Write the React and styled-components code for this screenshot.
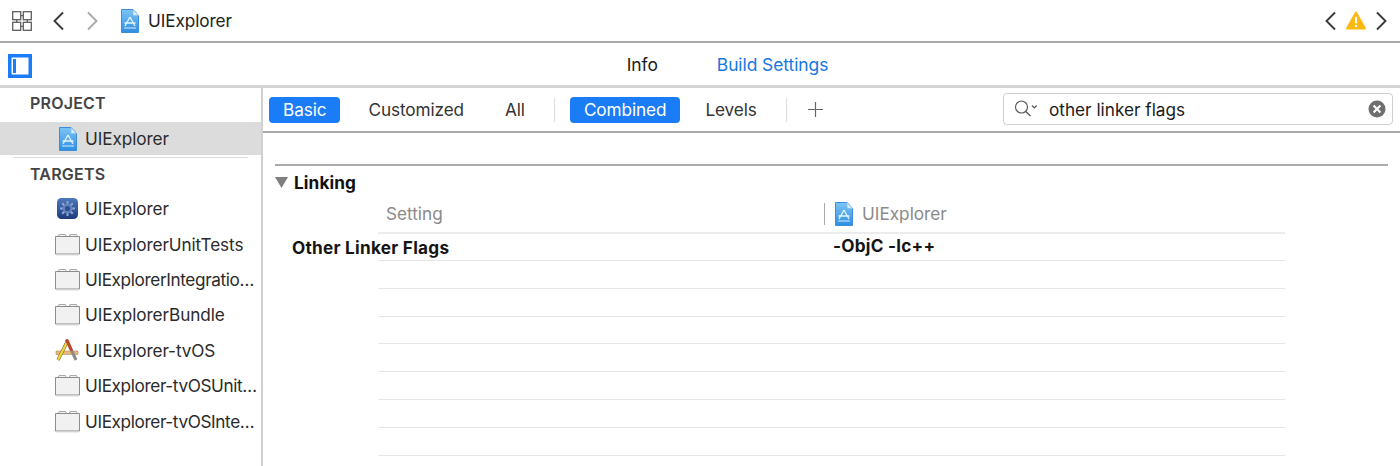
import React from 'react';
import styled, { createGlobalStyle } from 'styled-components';

const Global = createGlobalStyle`
  html, body { margin: 0; padding: 0; background: #fff; }
  body { font-family: Inter, "Liberation Sans", sans-serif; color: #1c1c1c; overflow: hidden; }
  #root { width: 1400px; height: 466px; overflow: hidden; }
`;

const Page = styled.div`
  width: 1400px; height: 466px; display: flex; flex-direction: column; background: #fff;
`;
const TopBar = styled.header`
  height: 41px; flex: none; display: flex; align-items: center; padding: 0 12px 0 12px;
  border-bottom: 2px solid #a9a9a9;
`;
const NavGroup = styled.div`
  display: flex; align-items: center; gap: ${p => p.$gap || 0}px;
`;
const Crumb = styled.span`
  font-size: 17.2px; letter-spacing: -0.1px; color: #222; margin-left: 9px;
`;
const Spacer = styled.div` flex: 1; `;
const TabBar = styled.div`
  height: 42px; flex: none; position: relative; display: flex; align-items: center; justify-content: center;
  padding-left: 55px; gap: 59px; border-bottom: 3px solid #d4d4d4;
`;
const ToggleWrap = styled.div`
  position: absolute; left: 8px; top: 11px; line-height: 0;
`;
const Tab = styled.span`
  font-size: 17.4px; letter-spacing: -0.05px; color: ${p => (p.$active ? '#1577e0' : '#1c1c1c')};
`;
const Body = styled.div`
  flex: 1; min-height: 0; display: flex;
`;
const Sidebar = styled.aside`
  width: 261px; flex: none; border-right: 2px solid #d0d0d0; display: flex; flex-direction: column;
`;
const SectionHead = styled.div`
  height: ${p => p.$h}px; box-sizing: border-box; padding-bottom: ${p => p.$pb}px; flex: none; display: flex; align-items: center; padding-left: 30px;
  font-size: 16px; font-weight: 600; color: #444; letter-spacing: 0.2px;
`;
const SideRow = styled.div`
  height: ${p => (p.$selected ? 33 : 35.4)}px; flex: none; display: flex; align-items: center; font-size: 17.2px;
  letter-spacing: ${p => (p.$tight ? -0.38 : -0.1)}px; color: #2b2b2b;
  white-space: nowrap; overflow: hidden;
  background: ${p => (p.$selected ? '#dcdcdc' : 'transparent')};
`;
const IconSlot = styled.span`
  width: 85px; flex: none; display: flex; justify-content: flex-end; padding-right: ${p => p.$pr}px; box-sizing: border-box; line-height: 0;
`;
const SideRule = styled.div`
  height: 1px; margin: 2px 13px 0 13px; background: #dedede; flex: none;
`;
const Main = styled.main`
  flex: 1; min-width: 0; display: flex; flex-direction: column;
`;
const Filter = styled.div`
  height: 45px; flex: none; display: flex; align-items: center; padding: 0 7px 0 6px;
  border-bottom: 2px solid #a9a9a9; box-sizing: border-box;
`;
const Pill = styled.span`
  height: 26px; padding: 0 14px; display: flex; align-items: center; border-radius: 4px; background: #1a7cf6; color: #fff;
  font-size: 17.2px; letter-spacing: -0.1px; margin-right: ${p => p.$mr || 0}px;
`;
const Plain = styled.span`
  font-size: 17.2px; letter-spacing: -0.1px; color: #333; margin-right: ${p => p.$mr || 0}px;
`;
const Sep = styled.span`
  width: 1px; height: 24px; background: #dedede; margin-right: ${p => p.$mr || 0}px;
`;
const PlusIcon = styled.span` line-height: 0; `;
const Search = styled.div`
  width: 390px; height: 32px; margin-bottom: 1px; box-sizing: border-box; border: 1px solid #cfcfcf; border-radius: 4px; display: flex; align-items: center;
  padding: 0 6px 0 10px; font-size: 17.2px; color: #1c1c1c;
`;
const SearchText = styled.span` margin-left: 11px; flex: 1; `;
const Content = styled.div`
  flex: 1; min-height: 0; padding: 31px 12px 0 12px; display: flex; flex-direction: column;
`;
const Section = styled.div`
  border-top: 2px solid #ababab; display: flex; flex-direction: column;
`;
const Group = styled.div`
  height: 33px; display: flex; align-items: center; gap: 6px; font-size: 17.2px; font-weight: 700; letter-spacing: 0.1px; color: #111;
`;
const Table = styled.div`
  margin: 0 103px 0 103px; display: flex; flex-direction: column;
`;
const HeadRow = styled.div`
  height: 29px; padding-bottom: 4px; display: grid; grid-template-columns: 446px 1fr; align-items: center;
  border-bottom: 2px solid #ececec; font-size: 17.2px; letter-spacing: 0; color: #8a8a8a;
`;
const HeadCell = styled.div`
  padding-left: 8px;
`;
const HeadTarget = styled.div`
  display: flex; align-items: center; gap: 9px; height: 22px; border-left: 1px solid #a9a9a9; padding-left: 10px; line-height: 0;
`;
const HeadTargetText = styled.span` line-height: normal; `;
const DataRow = styled.div`
  height: 26px; display: grid; grid-template-columns: 447px 1fr; align-items: center; border-bottom: 1px solid #e6e6e6;
  font-size: 17.2px; font-weight: 700; letter-spacing: 0.25px; color: #151515;
`;
const Flag = styled.div`
  margin-left: -86px; white-space: nowrap;
`;
const FlagValue = styled.div`
  padding-left: 8px; position: relative; top: -2px;
`;
const EmptyRow = styled.div`
  height: 26.8px; border-bottom: 1px solid #e6e6e6; flex: none;
`;

const Chevron = ({ dir, color = '#3a3a3a', h = 20, ml = 0, mr = 0 }) => (
  <svg width="13" height={h} viewBox="0 0 13 20" style={{ marginLeft: ml, marginRight: mr }} fill="none">
    <path d={dir === 'l' ? 'M11 1.5 2.5 10 11 18.5' : 'M2 1.5 10.5 10 2 18.5'} stroke={color} strokeWidth="1.9" />
  </svg>
);

const Grid = () => (
  <svg width="20" height="20" viewBox="0 0 20 20" fill="none" stroke="#5f5f5f" strokeWidth="1.3">
    <rect x=".7" y=".7" width="8" height="8" />
    <rect x="11.3" y=".7" width="8" height="8" />
    <rect x=".7" y="11.3" width="8" height="8" />
    <rect x="11.3" y="11.3" width="8" height="8" />
    <path d="M8.7 4.7h2.6M4.7 8.7v2.6M15.3 8.7v2.6M8.7 15.3h2.6" />
  </svg>
);

const DocIcon = ({ w = 18, h = 24 }) => (
  <svg width={w} height={h} viewBox="0 0 18 24">
    <defs>
      <linearGradient id="docg" x1="0" y1="0" x2="0" y2="1">
        <stop offset="0" stopColor="#7cc4f5" />
        <stop offset="1" stopColor="#2f8fe3" />
      </linearGradient>
    </defs>
    <path d="M.5.5h11.5l5.5 6v17H.5z" fill="url(#docg)" stroke="#3a8fd8" />
    <path d="M12 .5v6h5.5z" fill="#d8ecfb" stroke="#7cb8e8" strokeWidth=".6" />
    <path d="M3 19h12" stroke="#d6ecfb" strokeWidth="1" />
    <path d="M9 8 4 17M9 8l5 9M3.5 14h11" stroke="#e4f3fd" strokeWidth="1.3" fill="none" />
  </svg>
);

const GearIcon = () => (
  <svg width="21" height="21" viewBox="0 0 21 21">
    <defs>
      <linearGradient id="gearg" x1="0" y1="0" x2="0" y2="1">
        <stop offset="0" stopColor="#4f79bd" />
        <stop offset="1" stopColor="#1d3a7c" />
      </linearGradient>
    </defs>
    <rect width="21" height="21" rx="4.5" fill="url(#gearg)" />
    <g stroke="#8fa8d2" strokeWidth="2">
      <path d="M10.5 3v15M3 10.5h15M5.2 5.2l10.6 10.6M15.8 5.2 5.2 15.8" />
    </g>
    <circle cx="10.5" cy="10.5" r="5" fill="#6382ba" />
    <circle cx="10.5" cy="10.5" r="2.6" fill="#2d4f93" />
  </svg>
);

const BlockIcon = () => (
  <svg width="25" height="23" viewBox="0 0 25 23">
    <path d="M3 4l1-2.5h6.5L11.5 4M14 4l1-2.5h6.5L22.5 4" fill="#f1f1f1" stroke="#a8a8a8" />
    <path d="M.5 3.5h24v17.5H.5z" fill="#f1f1f1" stroke="#8c8c8c" />
    <path d="M1 22h23" stroke="#dcdcdc" />
  </svg>
);

const AppIcon = () => (
  <svg width="24" height="24" viewBox="0 0 24 24">
    <path d="M1 13h22v3.5H1z" fill="#e6b877" stroke="#b98d55" strokeWidth=".6" />
    <path d="M13 2 3 22" stroke="#6b6b3a" strokeWidth="3.4" />
    <path d="M13 2 3 22" stroke="#f4d63a" strokeWidth="2.2" />
    <path d="M11.5 1.5 21 22" stroke="#8a8a8a" strokeWidth="3" />
    <path d="M11.5 1.5 16.5 12.5" stroke="#c8422a" strokeWidth="3" />
  </svg>
);

const Toggle = () => (
  <svg width="24" height="24" viewBox="0 0 24 24" fill="none">
    <rect x="1.75" y="1.75" width="20.5" height="20.5" stroke="#1a7cf6" strokeWidth="3.5" />
    <rect x="5" y="5" width="3" height="14" fill="#1a7cf6" />
  </svg>
);

const Warning = () => (
  <svg width="20" height="19" viewBox="0 0 20 19">
    <path d="M10 1.5 19 17.5H1z" fill="#fdb813" stroke="#fdb813" strokeWidth="2" strokeLinejoin="round" />
    <rect x="9" y="5.5" width="2" height="7" rx="1" fill="#fff" />
    <circle cx="10" cy="15" r="1.2" fill="#fff" />
  </svg>
);

const Magnifier = () => (
  <svg width="24" height="20" viewBox="0 0 24 20" fill="none" stroke="#555">
    <circle cx="7.5" cy="8" r="6" strokeWidth="1.1" />
    <path d="M11.8 12.5 16.5 17" strokeWidth="1.3" />
    <path d="M18 6.5l2.3 2.3 2.3-2.3" strokeWidth="1.2" />
  </svg>
);

const Clear = () => (
  <svg width="18" height="18" viewBox="0 0 18 18">
    <circle cx="9" cy="9" r="8.5" fill="#6f6f6f" />
    <path d="M5.6 5.6l6.8 6.8M12.4 5.6l-6.8 6.8" stroke="#fff" strokeWidth="2.1" />
  </svg>
);

const Plus = () => (
  <svg width="17" height="17" viewBox="0 0 17 17" stroke="#666" strokeWidth="1.2">
    <path d="M8.5 1v15M1 8.5h15" />
  </svg>
);

const Caret = () => (
  <svg width="13" height="11" viewBox="0 0 13 11"><path d="M0 0h13L6.5 11z" fill="#7f7f7f" /></svg>
);

const targets = [
  ['UIExplorer', GearIcon, 7],
  ['UIExplorerUnitTests', BlockIcon, 5],
  ['UIExplorerIntegratio…', BlockIcon, 5, true],
  ['UIExplorerBundle', BlockIcon, 5],
  ['UIExplorer-tvOS', AppIcon, 6],
  ['UIExplorer-tvOSUnit…', BlockIcon, 5, true],
  ['UIExplorer-tvOSInte…', BlockIcon, 5, true],
];

export default function App() {
  return (
    <Page>
      <Global />
      <TopBar>
        <NavGroup>
          <Grid />
          <Chevron dir="l" ml={20} />
          <Chevron dir="r" color="#aaa" ml={21} mr={22} />
          <DocIcon />
          <Crumb>UIExplorer</Crumb>
        </NavGroup>
        <Spacer />
        <NavGroup $gap={9}>
          <Chevron dir="l" />
          <Warning />
          <Chevron dir="r" />
        </NavGroup>
      </TopBar>
      <TabBar>
        <ToggleWrap><Toggle /></ToggleWrap>
        <Tab>Info</Tab>
        <Tab $active>Build Settings</Tab>
      </TabBar>
      <Body>
        <Sidebar>
          <SectionHead $h={34} $pb={4}>PROJECT</SectionHead>
          <SideRow $selected>
            <IconSlot $pr={8}><DocIcon /></IconSlot>
            UIExplorer
          </SideRow>
          <SideRule />
          <SectionHead $h={33} $pb={2}>TARGETS</SectionHead>
          {targets.map(([name, Icon, pr, tight]) => (
            <SideRow key={name} $tight={tight}>
              <IconSlot $pr={pr}><Icon /></IconSlot>
              {name}
            </SideRow>
          ))}
        </Sidebar>
        <Main>
          <Filter>
            <Pill $mr={28}>Basic</Pill>
            <Plain $mr={41}>Customized</Plain>
            <Plain $mr={29}>All</Plain>
            <Sep $mr={15} />
            <Pill $mr={25}>Combined</Pill>
            <Plain $mr={29}>Levels</Plain>
            <Sep $mr={20} />
            <PlusIcon><Plus /></PlusIcon>
            <Spacer />
            <Search>
              <Magnifier />
              <SearchText>other linker flags</SearchText>
              <Clear />
            </Search>
          </Filter>
          <Content>
            <Section>
              <Group><Caret />Linking</Group>
              <Table>
                <HeadRow>
                  <HeadCell>Setting</HeadCell>
                  <HeadTarget><DocIcon /><HeadTargetText>UIExplorer</HeadTargetText></HeadTarget>
                </HeadRow>
                <DataRow>
                  <Flag>Other Linker Flags</Flag>
                  <FlagValue>-ObjC -lc++</FlagValue>
                </DataRow>
                {[0, 1, 2, 3, 4, 5, 6].map(i => <EmptyRow key={i} />)}
              </Table>
            </Section>
          </Content>
        </Main>
      </Body>
    </Page>
  );
}
